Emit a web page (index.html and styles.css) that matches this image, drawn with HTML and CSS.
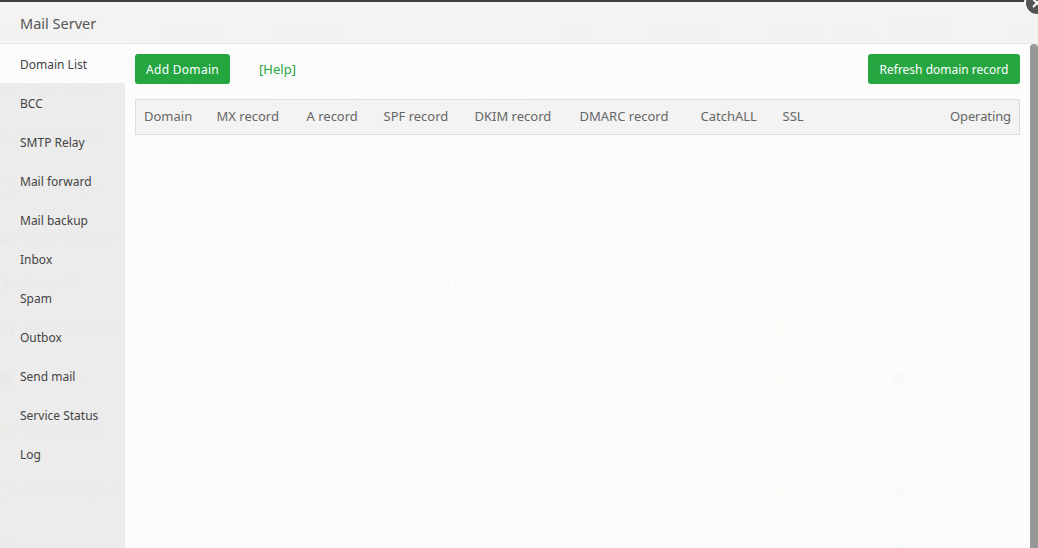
FILE: index.html
```html
<!DOCTYPE html>
<html lang="en">
<head>
<meta charset="utf-8">
<title>Mail Server</title>
<link rel="stylesheet" href="styles.css">
</head>
<body>
<div class="topline"></div>
<main class="backdrop">
  <table class="soft">
    <thead>
      <tr><th class="c-name">Software name</th><th class="c-dev">Developer</th><th class="c-ins">Instructions</th><th class="c-price">Price</th><th class="c-exp">Expire date</th><th class="c-loc">Location</th><th class="c-st">Status</th><th class="c-dash">Display on dashboard</th><th class="c-op">Operating</th></tr>
    </thead>
    <tbody>
      <tr><td><span class="nm"><svg class="ic" viewBox="0 0 20 20"><circle cx="10" cy="10" r="8" fill="none" stroke="#7bb08a" stroke-width="2"/><path d="M12 3 6 11h4l-2 6 6-8h-4z" fill="#5a9a6a"/></svg>WebSite Speed</span></td><td>official</td><td>Website acceleration, supporting dynamic acceleration of independent website projects</td><td>Free</td><td></td><td></td><td></td><td></td><td></td></tr>
      <tr><td><span class="nm"><svg class="ic" viewBox="0 0 20 20"><path d="M4 11h10v3a4 4 0 0 1-4 4H8a4 4 0 0 1-4-4z" fill="#5b7fa8"/><path d="M10 2c2 3-3 4-1 7" fill="none" stroke="#c0504d" stroke-width="2"/></svg>Java Manager</span></td><td>official</td><td>The first choice for Tomcat and running JSP programs</td><td>Free</td><td></td><td></td><td></td><td></td><td></td></tr>
      <tr><td><span class="nm"><svg class="ic" viewBox="0 0 20 20"><path d="M10 1l8 4.500v9L10 19l-8-4.500v-9z" fill="none" stroke="#7a9a7a" stroke-width="2"/></svg>PM2 Manager</span></td><td>official</td><td>Node.js Manager,&nbsp; Built-in node.js + npm + nvm + pm2.</td><td>Free</td><td></td><td></td><td></td><td></td><td></td></tr>
      <tr><td><span class="nm"><svg class="ic" viewBox="0 0 20 20"><path d="M1 10h16c1 0 2-1 2-2 0 5-4 9-10 9-5 0-8-3-8-7z" fill="#4c8fc9"/><path d="M4 6h8v3H4z" fill="#4c8fc9"/></svg>Docker Manager</span></td><td>official</td><td>Docker Is an open source application container engine</td><td>Free</td><td></td><td></td><td></td><td></td><td></td></tr>
      <tr><td><span class="nm"><svg class="ic" viewBox="0 0 20 20"><path d="M10 1c4 4 5 9 0 18-5-9-4-14 0-18z" fill="#5d9a5d"/></svg>MongoDB</span></td><td>official</td><td>Database Based on Distributed File Storage</td><td>Free</td><td></td><td></td><td></td><td></td><td></td></tr>
      <tr><td><span class="nm"><svg class="ic" viewBox="0 0 20 20"><path d="M2 18V3h4l4 9 4-9h4v15h-4V9l-3 7H9L6 9v9z" fill="#4a8cc9"/></svg>Memcached 1.6.20</span></td><td>official</td><td>Memcached is a high performance distributed memory object caching system</td><td>Free</td><td></td><td><i class="folder"></i></td><td><i class="play"></i></td><td><i class="tog"></i></td><td>Update</td></tr>
      <tr><td><span class="nm"><svg class="ic" viewBox="0 0 20 20"><path d="M10 2l8 4v8l-8 4-8-4V6z" fill="#c0504d"/></svg>Redis 7.0.11</span></td><td>official</td><td>Redis is a high performance key-value database</td><td>Free</td><td></td><td><i class="folder"></i></td><td><i class="play"></i></td><td><i class="tog"></i></td><td></td></tr>
      <tr><td><span class="nm"><svg class="ic" viewBox="0 0 20 20"><path d="M10 2l2.500 5.500 5.500.5-4 4 1 6-5-3-5 3 1-6-4-4 5.500-.5z" fill="#e0c040"/></svg>Openlitespeed</span></td><td>official</td><td>OpenLiteSpeed is the Open Source edition of LiteSpeed Web Server Enterprise.</td><td>Free</td><td></td><td></td><td></td><td></td><td></td></tr>
      <tr><td><span class="nm"><svg class="ic" viewBox="0 0 20 20"><circle cx="10" cy="10" r="7.500" fill="none" stroke="#c98a8a" stroke-width="3" stroke-dasharray="3 1.500"/></svg>DDNS Manager 1.0</span></td><td>official</td><td>Automatically update the dynamic IP for your domain name. (Currently only Cloudflare is supported)</td><td>Free</td><td></td><td><i class="folder"></i></td><td><i class="play"></i></td><td><i class="tog"></i></td><td></td></tr>
      <tr><td><span class="nm"><svg class="ic" viewBox="0 0 20 20"><circle cx="10" cy="10" r="7.500" fill="none" stroke="#c98a8a" stroke-width="3"/></svg>Dns Manager 2.6</span></td><td>official</td><td>Build your own dns server based on pdns, supporting multiple domain names</td><td>Free</td><td></td><td></td><td></td><td><i class="tog"></i></td><td></td></tr>
    </tbody>
  </table>
</main>

<section class="modal">
  <header class="modal-title">Mail Server</header>
  <div class="modal-body">
    <nav class="side">
      <a class="side-item active">Domain List</a>
      <a class="side-item">BCC</a>
      <a class="side-item">SMTP Relay</a>
      <a class="side-item">Mail forward</a>
      <a class="side-item">Mail backup</a>
      <a class="side-item">Inbox</a>
      <a class="side-item">Spam</a>
      <a class="side-item">Outbox</a>
      <a class="side-item">Send mail</a>
      <a class="side-item">Service Status</a>
      <a class="side-item">Log</a>
    </nav>
    <div class="content">
      <div class="toolbar">
        <button class="btn btn-add">Add Domain</button>
        <a class="help">[Help]</a>
        <button class="btn btn-right">Refresh domain record</button>
      </div>
      <table class="domains">
        <thead>
          <tr><th class="d1">Domain</th><th class="d2">MX record</th><th class="d3">A record</th><th class="d4">SPF record</th><th class="d5">DKIM record</th><th class="d6">DMARC record</th><th class="d7">CatchALL</th><th class="d8">SSL</th><th class="d9">Operating</th></tr>
        </thead>
      </table>
    </div>
    <div class="scrollbar"></div>
  </div>
</section>
<button class="close" aria-label="Close"><svg width="22" height="22" viewBox="0 0 22 22"><path d="M7 7l8 8M15 7l-8 8" stroke="#fff" stroke-width="2" fill="none"/></svg></button>
</body>
</html>
```
FILE: styles.css
```css
* { box-sizing: border-box; }
html, body { margin: 0; height: 100%; }
body {
  width: 1038px;
  height: 548px;
  overflow: hidden;
  background: #fff;
  font-family: "Noto Sans", "Open Sans", sans-serif;
  color: #666;
  font-size: 12px;
  position: relative;
}
.topline { height: 2px; background: #3f3f3f; }

.backdrop { height: 546px; overflow: hidden; }
.soft {
  table-layout: fixed;
  border-collapse: collapse;
  width: 1090px;
  margin-left: -12px;
  margin-top: 9px;
  font-size: 12.2px;
  line-height: 17px;
  color: #666;
  opacity: 0.85;
}
.soft th { font-weight: 400; text-align: left; padding: 0 8px 6px; height: 48px; }
.soft th.c-name { padding-left: 11px; }
.soft td { padding: 8px; height: 40px; border-bottom: 1px solid #f0f0f0; vertical-align: middle; }
.c-name { width: 167px; }
.c-dev { width: 110px; }
.c-ins { width: 286px; }
.c-price { width: 92px; }
.c-exp { width: 120px; }
.c-loc { width: 67px; }
.c-st { width: 52px; }
.c-dash { width: 120px; }
.nm { display: flex; align-items: center; gap: 6px; white-space: nowrap; }
.ic { width: 20px; height: 20px; flex: none; }
.folder { display: block; width: 13px; height: 10px; margin-left: 1px; background: #e8c64a; border-radius: 1px; }
.play { display: block; width: 0; height: 0; margin-left: 2px; border-left: 9px solid #5f8f70; border-top: 5.5px solid transparent; border-bottom: 5.5px solid transparent; }
.tog { display: block; position: relative; width: 26px; height: 14px; margin-left: 2px; background: #6fae80; border-radius: 8px; }
.tog::after { content: ""; position: absolute; right: 2px; top: 1.5px; width: 11px; height: 11px; border-radius: 50%; background: #fff; }

.modal {
  position: absolute;
  left: 0; top: 2px;
  width: 1038px;
  height: 546px;
  display: flex;
  flex-direction: column;
  color: #555;
}
.modal-title {
  height: 42px;
  flex: none;
  padding: 0 20px;
  display: flex;
  align-items: center;
  font-size: 14.5px;
  color: #555;
  background: rgba(243, 243, 243, 0.975);
  border-bottom: 1px solid #e8e8e8;
}
.modal-body { flex: 1; display: flex; min-height: 0; }
.side {
  width: 125px;
  flex: none;
  display: flex;
  flex-direction: column;
  background: rgba(236, 236, 236, 0.975);
}
.side-item {
  height: 39px;
  line-height: 41px;
  padding-left: 20px;
  font-size: 12px;
  color: #444;
}
.side-item.active { background: #fbfbfb; }
.content {
  flex: 1;
  min-width: 0;
  padding: 10px 10px 0;
  background: rgba(252, 252, 252, 0.975);
}
.toolbar { display: flex; align-items: center; height: 30px; }
.btn {
  height: 30px;
  padding: 0 11px;
  border: 0;
  border-radius: 3px;
  background: #26a641;
  color: #fff;
  font: inherit;
  font-size: 12px;
}
.btn-add { letter-spacing: 0.3px; }
.btn-right { margin-left: auto; width: 152px; padding: 0; }
.help { margin-left: 29px; color: #26a641; font-size: 13px; }
.domains {
  width: 100%;
  margin-top: 15px;
  border-collapse: collapse;
  table-layout: fixed;
  border: 1px solid #ddd;
  background: #f3f3f3;
}
.domains th { height: 35px; padding: 0 0 2px 8px; font-weight: 400; font-size: 13px; text-align: left; color: #666; white-space: nowrap; }
.d1 { width: 73px; }
.d2 { width: 90px; }
.d3 { width: 77px; }
.d4 { width: 91px; }
.d5 { width: 105px; }
.d6 { width: 121px; }
.d7 { width: 82px; }
.d8 { width: 60px; }
.domains .d9 { text-align: right; padding-right: 8px; letter-spacing: -0.1px; }
.scrollbar { width: 8px; flex: none; background: #989898; border-radius: 4px 4px 0 0; }
.close {
  position: absolute;
  right: -12px; top: -10px;
  width: 26px; height: 26px;
  padding: 0;
  border: 2px solid #f6f6f6;
  border-radius: 50%;
  background: #555;
  display: flex;
  align-items: center;
  justify-content: center;
  overflow: hidden;
}
.close svg { flex: none; }
```
